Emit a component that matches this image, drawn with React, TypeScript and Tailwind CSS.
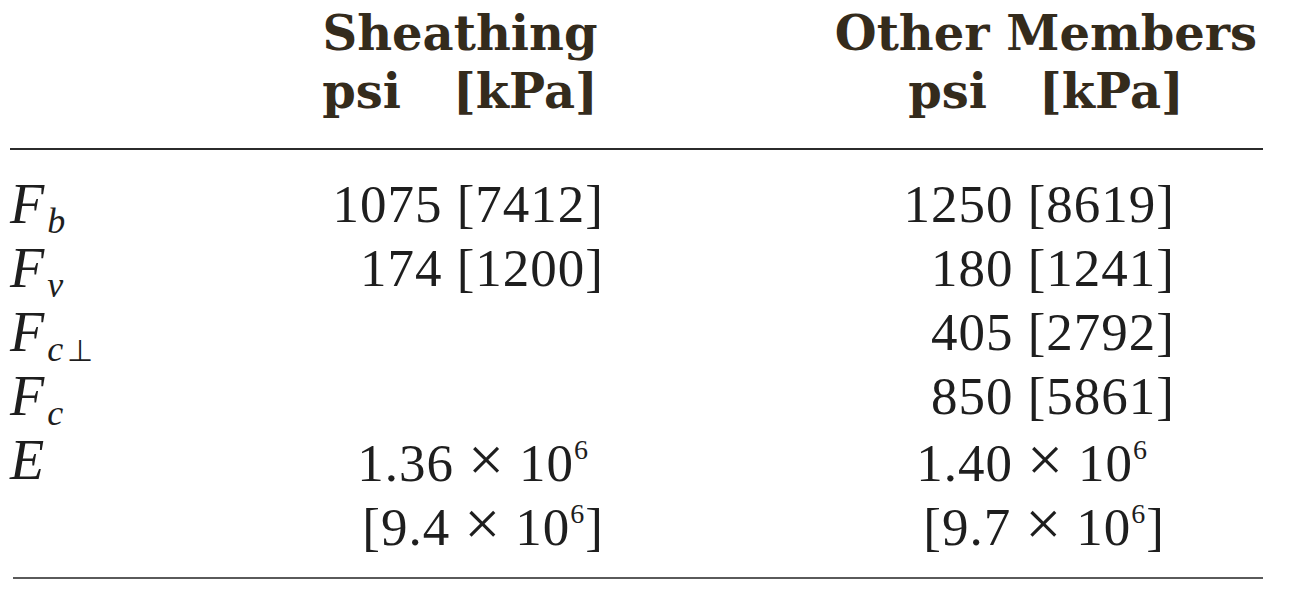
import React from "react";

type Cell = { text: React.ReactNode; pad: string };

const Sub: React.FC<{ children: React.ReactNode }> = ({ children }) => (
  <span className="text-[36px] align-[-10px] ml-[2px]">{children}</span>
);

const Var: React.FC<{ name: string; sub?: React.ReactNode }> = ({ name, sub }) => (
  <span className="font-['Liberation_Serif',serif] italic text-[56px]">
    {name}
    {sub && <Sub>{sub}</Sub>}
  </span>
);

// a × 10^6, optionally closed with a bracket
const Pow: React.FC<{ lead: string; close?: boolean }> = ({ lead, close }) => (
  <span>
    {lead}
    <span className="mx-[14px] text-[64px] leading-none">×</span>
    10
    <span className="relative -top-[22px] text-[28px] leading-none">6</span>
    {close && "]"}
  </span>
);

const rows: { label: React.ReactNode; a: Cell; b: Cell }[] = [
  { label: <Var name="F" sub="b" />, a: { text: "1075 [7412]", pad: "pr-0" }, b: { text: "1250 [8619]", pad: "pr-0" } },
  { label: <Var name="F" sub="v" />, a: { text: "174 [1200]", pad: "pr-0" }, b: { text: "180 [1241]", pad: "pr-0" } },
  {
    label: <Var name="F" sub={<>c<span className="not-italic text-[30px] ml-[3px]">⊥</span></>} />,
    a: { text: "", pad: "pr-0" },
    b: { text: "405 [2792]", pad: "pr-0" },
  },
  { label: <Var name="F" sub="c" />, a: { text: "", pad: "pr-0" }, b: { text: "850 [5861]", pad: "pr-0" } },
  {
    label: <Var name="E" />,
    a: { text: <Pow lead="1.36" />, pad: "pr-[15px]" },
    b: { text: <Pow lead="1.40" />, pad: "pr-[27px]" },
  },
  {
    label: null,
    a: { text: <Pow lead="[9.4" close />, pad: "pr-0" },
    b: { text: <Pow lead="[9.7" close />, pad: "pr-[10px]" },
  },
];

export default function App() {
  return (
    <div className="w-[1290px] h-[600px] bg-white overflow-hidden pl-[10px]">
      {/* column heads */}
      <div className="flex pt-[4px] font-['DejaVu_Serif',serif] font-bold text-[48px] leading-[58px] text-[#342b1c]">
        <div className="w-[300px]" />
        <div className="w-[300px] flex flex-col items-center">
          <div>Sheathing</div>
          <div className="flex gap-[52px]">
            <span>psi</span>
            <span>[kPa]</span>
          </div>
        </div>
        <div className="w-[434px] ml-[219px] flex flex-col items-center">
          <div>Other Members</div>
          <div className="flex gap-[52px]">
            <span>psi</span>
            <span>[kPa]</span>
          </div>
        </div>
      </div>

      <div className="w-[1253px] h-[2px] bg-[#2b2b2b] mt-[28px]" />

      {/* values */}
      <div className="mt-[22px] font-['Liberation_Serif',serif] text-[53px] leading-[64px] tracking-[1px] text-[#1e1e1e]">
        {rows.map((r, i) => (
          <div key={i} className="flex h-[64px]">
            <div className="w-[300px] whitespace-nowrap">{r.label}</div>
            <div className={`w-[294px] text-right whitespace-nowrap ${r.a.pad}`}>{r.a.text}</div>
            <div className={`w-[571px] text-right whitespace-nowrap ${r.b.pad}`}>{r.b.text}</div>
          </div>
        ))}
      </div>

      <div className="w-[1250px] ml-[3px] h-[2px] bg-[#5a5a5a] mt-[21px]" />
    </div>
  );
}
